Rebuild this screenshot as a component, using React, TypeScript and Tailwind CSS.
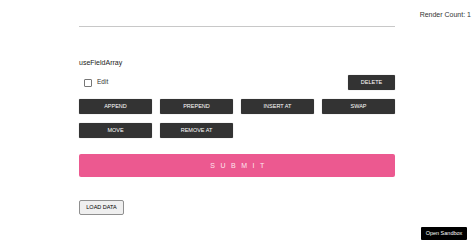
const ACTIONS = ["APPEND", "PREPEND", "INSERT AT", "SWAP", "MOVE", "REMOVE AT"];

const DarkButton = ({ label, className = "" }: { label: string; className?: string }) => {
  return (
    <button
      type="button"
      className={`h-[15px] rounded-[1px] bg-[#333333] text-[5.5px] leading-none text-white shadow-[0_0_1px_rgba(0,0,0,0.4)] ${className}`}
    >
      {label}
    </button>
  );
};

const App = () => {
  return (
    <div className="relative h-[248px] w-[474px] overflow-hidden bg-white font-['Liberation_Sans',Arial,sans-serif] text-[#222]">
      <div className="absolute right-[3px] top-[11px] text-[7px] leading-[8px] text-[#333]">
        Render Count: 1
      </div>

      <div className="ml-[79px] flex w-[316px] flex-col pt-[26px]">
        <div className="h-px w-full bg-[#c8c8c8]" />

        <p className="mt-[32px] text-[7px] leading-[8px] text-[#222]">useFieldArray</p>

        <div className="mt-[8px] flex h-[15px] items-center justify-between">
          <label className="ml-[5px] flex items-center gap-[5px] text-[6.5px] leading-none text-[#333]">
            <span className="block h-[8px] w-[8px] rounded-[1px] border border-[#767676] bg-white" />
            Edit
          </label>
          <DarkButton label="DELETE" className="w-[47px]" />
        </div>

        <div className="mt-[9px] grid grid-cols-4 gap-x-[8px] gap-y-[9px]">
          {ACTIONS.map((a) => (
            <DarkButton key={a} label={a} />
          ))}
        </div>

        <button
          type="button"
          className="mt-[16px] h-[23px] w-full rounded-[2px] bg-[#ec5990] pl-[6px] text-[7px] leading-none tracking-[5.5px] text-[#fde6ee]"
        >
          SUBMIT
        </button>

        <div className="mt-[15px]">
          <button
            type="button"
            className="h-[15px] w-[45px] rounded-[2px] border border-[#8f8f8f] bg-[#efefef] text-[5.5px] leading-none text-black"
          >
            LOAD DATA
          </button>
        </div>
      </div>

      <div className="absolute left-[421px] top-[227px] flex h-[13px] w-[46px] items-center justify-center rounded-[1px] bg-black text-[5.5px] leading-none text-white">
        Open Sandbox
      </div>
    </div>
  );
};

export default App;
